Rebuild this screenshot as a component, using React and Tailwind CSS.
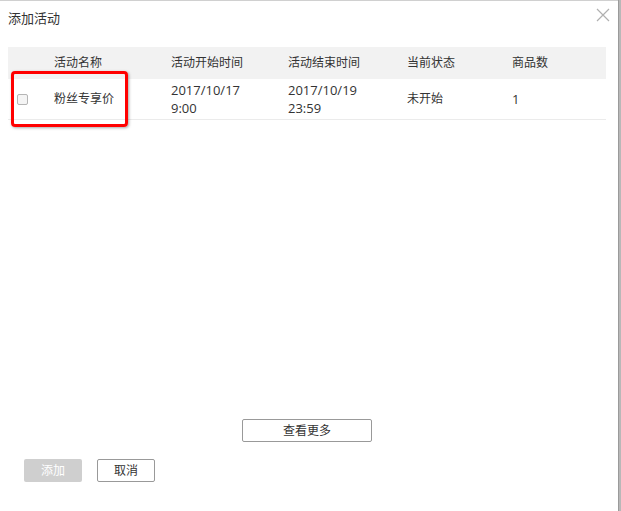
import React from 'react';

const cols = [
    { label: '活动名称', w: 'w-[117px]' },
    { label: '活动开始时间', w: 'w-[117px]' },
    { label: '活动结束时间', w: 'w-[119px]' },
    { label: '当前状态', w: 'w-[105px]' },
    { label: '商品数', w: 'flex-1' },
];

const rows = [
    { name: '粉丝专享价', start: ['2017/10/17', '9:00'], end: ['2017/10/19', '23:59'], status: '未开始', count: '1' },
];

export default function App() {
    return (
        <div className="flex w-[621px] h-[511px] bg-white text-[#333] font-['Open_Sans','Noto_Sans_CJK_SC',sans-serif]">
            <div className="relative flex flex-col flex-1 border-t border-[#d0d0d0]">
                {/* Header */}
                <h2 className="pl-2 pt-[8px] text-[13px] leading-[18px]">添加活动</h2>
                <button className="absolute top-[7px] right-[8px] text-[#b0b0b0]" title="关闭">
                    <svg width="14" height="14" viewBox="0 0 14 14" stroke="currentColor" strokeWidth="1.2" fill="none">
                        <path d="M1 1 L13 13 M13 1 L1 13" />
                    </svg>
                </button>

                {/* Table */}
                <div className="mt-[20px] ml-2 mr-[12px] text-[12px]">
                    <div className="flex items-center h-[32px] bg-[#f2f2f2]">
                        <div className="w-[38px]" />
                        {cols.map(c => (
                            <div key={c.label} className={`${c.w} pl-2`}>{c.label}</div>
                        ))}
                    </div>
                    {rows.map(r => (
                        <div key={r.name} className="flex items-center h-[41px] border-b border-[#ebebeb] text-[13px] leading-[18px]">
                            <div className="w-[38px] flex pl-[9px]">
                                <span className="block w-[11px] h-[11px] rounded-[2px] border border-[#b5b5b5] bg-[#f4f4f4]" />
                            </div>
                            <div className="w-[117px] pl-2 text-[12px]">{r.name}</div>
                            <div className="w-[117px] pl-2">{r.start[0]}<br />{r.start[1]}</div>
                            <div className="w-[119px] pl-2">{r.end[0]}<br />{r.end[1]}</div>
                            <div className="w-[105px] pl-2 text-[12px]">{r.status}</div>
                            <div className="flex-1 pl-2">{r.count}</div>
                        </div>
                    ))}
                </div>

                {/* Highlight */}
                <div className="absolute left-[11px] top-[70px] w-[117px] h-[56px] border-[3px] border-[#f00] rounded-[4px] shadow-[1px_1px_3px_rgba(0,0,0,0.35)]" />

                <div className="flex-1" />

                <div className="flex justify-center pr-[4px]">
                    <button className="w-[130px] h-[23px] border border-[#999] rounded-[2px] text-[12px] text-[#333]">查看更多</button>
                </div>

                <div className="flex gap-[15px] pl-[24px] mt-[17px] mb-[29px]">
                    <button className="w-[58px] h-[23px] rounded-[2px] bg-[#cfcfcf] text-white text-[12px]">添加</button>
                    <button className="w-[58px] h-[23px] rounded-[2px] border border-[#999] text-[12px] text-[#333]">取消</button>
                </div>
            </div>
            <div className="w-[3px] bg-[#b8b8b8] border-l border-[#9a9a9a]" />
        </div>
    );
}
